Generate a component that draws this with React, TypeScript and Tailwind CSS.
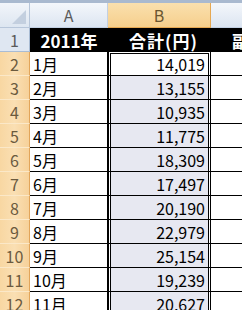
import React from "react";

const data: [string, string][] = [
  ["1月", "14,019"],
  ["2月", "13,155"],
  ["3月", "10,935"],
  ["4月", "11,775"],
  ["5月", "18,309"],
  ["6月", "17,497"],
  ["7月", "20,190"],
  ["8月", "22,979"],
  ["9月", "25,154"],
  ["10月", "19,239"],
  ["11月", "20,627"],
];

const font = { fontFamily: '"Noto Sans CJK JP", "Noto Sans", sans-serif' };

export default function App() {
  return (
    <div className="w-[242px] h-[310px] overflow-hidden bg-white" style={font}>
      <div className="h-[3px] bg-[#a9b9cf]" />
      {/* column header */}
      <div className="grid grid-cols-[30px_78px_103px_31px] h-[25px]">
        <div className="relative bg-gradient-to-b from-[#f2f5fa] to-[#dde6f1] border-r border-b border-[#b7c6da]">
          <svg className="absolute right-[3px] bottom-[3px]" width="14" height="14" viewBox="0 0 14 14">
            <polygon points="14,0 14,14 0,14" fill="#c3cfdf" />
          </svg>
        </div>
        <div className="flex items-center justify-center bg-gradient-to-b from-[#f4f7fb] to-[#dce5f1] border-r border-b border-[#c2d0e3] text-[16px] text-[#5b5b5b] leading-none">
          A
        </div>
        <div className="flex items-center justify-center bg-gradient-to-b from-[#fae0ae] to-[#f6cf8c] border-r border-b border-[#e6a852] text-[16px] text-[#6a5530] leading-none">
          B
        </div>
        <div className="bg-gradient-to-b from-[#f4f7fb] to-[#dce5f1] border-b border-[#c2d0e3]" />
      </div>
      {/* row 1 */}
      <div className="grid grid-cols-[30px_78px_103px_31px] h-[24px]">
        <div className="flex items-center justify-center bg-[#dfe7f2] border-r border-b border-[#a9bcd4] text-[16px] text-[#5b5b5b] leading-none">
          1
        </div>
        <div className="flex items-center justify-center bg-black text-white font-bold text-[17px] leading-none">
          2011年
        </div>
        <div className="flex items-center justify-center bg-black text-white font-bold text-[17px] tracking-[1px] leading-none pl-[8px]">
          合計(円)
        </div>
        <div className="flex items-center bg-black text-white font-bold text-[17px] leading-none pl-[21px] overflow-hidden whitespace-nowrap">
          副
        </div>
      </div>
      {data.map(([m, v], i) => (
        <div key={i} className="grid grid-cols-[30px_78px_103px_31px] h-[24px] shrink-0">
          <div className="flex items-center justify-center bg-gradient-to-r from-[#f8d7a2] via-[#fadfb3] to-[#f6d19a] border-r border-b border-r-[#e2a55a] border-b-[#fbe8c8] text-[16px] text-[#6b5a3e] leading-none">
            {i + 2}
          </div>
          <div className="flex items-center bg-white border-r border-b border-black pl-[3px] text-[16px] text-black leading-none">
            {m}
          </div>
          <div
            className={
              "flex items-center justify-end border-l border-r border-b border-black pr-[5px] text-[16px] text-black leading-none " +
              (i === 0
                ? "bg-white shadow-[inset_1px_1px_0_white,inset_-1px_0_0_white,inset_2px_2px_0_black,inset_-2px_0_0_black]"
                : "bg-[#e7e8f1] shadow-[inset_1px_0_0_white,inset_-1px_0_0_white,inset_2px_0_0_black,inset_-2px_0_0_black]")
            }
          >
            {v}
          </div>
          <div className="bg-white border-b border-black" />
        </div>
      ))}
    </div>
  );
}
